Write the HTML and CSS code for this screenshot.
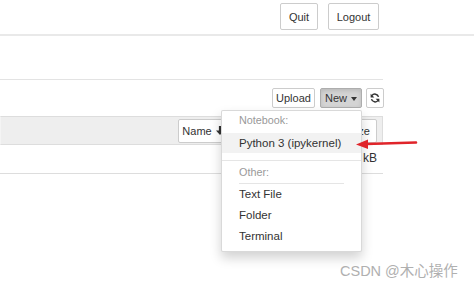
FILE: index.html
```html
<!DOCTYPE html>
<html lang="en">
<head>
    <meta charset="UTF-8">
    <title>Home Page - Select or create a notebook</title>
    <link rel="stylesheet" href="styles.css">
</head>
<body>
    <div class="header">
        <div class="header-inner">
            <button class="btn btn-quit">Quit</button>
            <button class="btn btn-logout">Logout</button>
        </div>
    </div>

    <div class="page">
        <div class="tabs-line"></div>

        <div class="toolbar">
            <button class="btn btn-sm btn-upload">Upload</button>
            <button class="btn btn-sm btn-new">New <span class="caret"></span></button>
            <button class="btn btn-sm btn-refresh" title="Refresh">
                <svg width="10" height="10" viewBox="0 0 16 16">
                    <path d="M13.6 6.2A6 6 0 0 0 3 4.2" fill="none" stroke="#333" stroke-width="2.4"/>
                    <path d="M2.4 9.8A6 6 0 0 0 13 11.8" fill="none" stroke="#333" stroke-width="2.4"/>
                    <path d="M1 1v6h6z" fill="#333"/>
                    <path d="M15 15V9H9z" fill="#333"/>
                </svg>
            </button>
        </div>

        <div class="list">
            <div class="list-header">
                <button class="btn btn-xs btn-name">Name
                    <svg width="8" height="9" viewBox="0 0 8 9">
                        <path d="M4 0v6" stroke="#333" stroke-width="2.2"/>
                        <path d="M0 4.5h8L4 9z" fill="#333"/>
                    </svg>
                </button>
                <button class="btn btn-xs btn-modified">Last Modified</button>
                <button class="btn btn-xs btn-size">Size</button>
            </div>
            <div class="list-row">
                <span class="file-size">kB</span>
            </div>
        </div>
    </div>

    <ul class="dropdown">
        <li class="dropdown-header">Notebook:</li>
        <li class="item active">Python 3 (ipykernel)</li>
        <li class="divider"></li>
        <li class="dropdown-header">Other:</li>
        <li class="divider inset"></li>
        <li class="item">Text File</li>
        <li class="item">Folder</li>
        <li class="item">Terminal</li>
    </ul>

    <svg class="pointer" width="64" height="14" viewBox="0 0 64 14">
        <path d="M60 5.5L10 7" stroke="#e0242a" stroke-width="2.6" stroke-linecap="round"/>
        <path d="M0 7.5L12 2.5v9.5z" fill="#e0242a"/>
    </svg>

    <div class="watermark">CSDN @木心操作</div>
</body>
</html>
```

FILE: styles.css
```css
body {
    margin: 0;
    font-family: "Liberation Sans", Arial, sans-serif;
    color: #333;
    background: #fff;
    position: relative;
    width: 474px;
    height: 284px;
    overflow: hidden;
}

.btn {
    font-family: inherit;
    color: #333;
    background: #fff;
    border: 1px solid #ccc;
    border-radius: 2px;
    padding: 0;
    cursor: pointer;
    white-space: nowrap;
}

/* header */
.header {
    height: 34px;
    border-bottom: 2px solid #e9e9e9;
}

.header-inner {
    width: 379px;
    display: flex;
    justify-content: flex-end;
    gap: 10px;
    padding-top: 3px;
}

.btn-quit,
.btn-logout {
    height: 27px;
    font-size: 11px;
}

.btn-quit {
    width: 38px;
}

.btn-logout {
    width: 51px;
}

/* page */
.page {
    width: 383px;
}

.tabs-line {
    height: 43px;
    border-bottom: 1px solid #e3e3e3;
}

.toolbar {
    display: flex;
    justify-content: flex-end;
    gap: 4px;
    padding-top: 8px;
    margin-right: -1px;
    height: 20px;
}

.btn-sm {
    height: 20px;
    font-size: 11px;
}

.btn-upload {
    width: 43px;
    margin-right: 1px;
}

.btn-new {
    width: 42px;
    background: #d4d4d4;
    border-color: #adadad;
    box-shadow: inset 0 2px 4px rgba(0, 0, 0, 0.12);
}

.caret {
    display: inline-block;
    width: 0;
    height: 0;
    border-top: 4px solid #333;
    border-left: 3.5px solid transparent;
    border-right: 3.5px solid transparent;
    vertical-align: middle;
    margin-left: 1px;
}

.btn-refresh {
    width: 18px;
    display: flex;
    align-items: center;
    justify-content: center;
}

/* file list */
.list {
    margin-top: 8px;
}

.list-header {
    height: 27px;
    background: #eeeeee;
    border: 1px solid #dddddd;
    border-left-color: #f4f4f4;
    display: flex;
    align-items: center;
    padding-right: 5px;
}

.btn-xs {
    height: 24px;
    font-size: 11px;
}

.btn-name {
    margin-left: 177px;
    width: 50px;
    display: flex;
    align-items: center;
    justify-content: center;
    gap: 4px;
}

.btn-modified {
    margin-left: 6px;
    width: 80px;
}

.btn-size {
    margin-left: auto;
    width: 36px;
    text-align: right;
    padding-right: 6px;
}

.list-row {
    height: 28px;
    border-bottom: 1px solid #dddddd;
    display: flex;
    align-items: center;
    justify-content: flex-end;
    padding-right: 6px;
    font-size: 12px;
}

.file-size {
    margin-top: -3px;
}

/* dropdown */
.dropdown {
    position: absolute;
    left: 221px;
    top: 110px;
    width: 139px;
    margin: 0;
    padding: 2px 0 4px;
    list-style: none;
    background: #fff;
    border: 1px solid rgba(0, 0, 0, 0.15);
    border-radius: 2px;
    box-shadow: 0 6px 12px rgba(0, 0, 0, 0.18);
}

.dropdown-header {
    height: 14px;
    line-height: 14px;
    padding-left: 17px;
    font-size: 10.8px;
    color: #999;
}

.dropdown-header + .item {
    margin-top: 6px;
}

.item {
    height: 21px;
    line-height: 21px;
    padding-left: 17px;
    font-size: 11.5px;
    color: #333;
    white-space: nowrap;
}

.item.active {
    height: 20px;
    line-height: 20px;
    background: #f2f2f2;
}

.divider {
    height: 1px;
    background: #e5e5e5;
    margin: 7px 0 4px;
}

.divider.inset {
    margin: 4px 17px 0;
}

/* annotation */
.pointer {
    position: absolute;
    left: 356px;
    top: 137px;
}

.watermark {
    position: absolute;
    left: 340px;
    top: 259px;
    font-family: "Liberation Sans", "Noto Sans CJK SC", sans-serif;
    font-size: 14.5px;
    color: #b0b0b0;
    white-space: nowrap;
}
```
